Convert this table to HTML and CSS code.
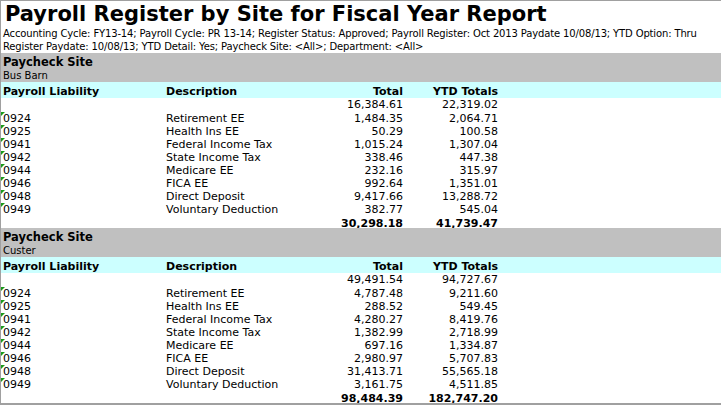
FILE: index.html
```html
<!DOCTYPE html>
<html>
<head>
<meta charset="utf-8">
<link rel="stylesheet" href="styles.css">
</head>
<body>
<div class="page">
  <h1 class="title">Payroll Register by Site for Fiscal Year Report</h1>
  <div class="params">
    <div class="pline">Accounting Cycle: FY13-14; Payroll Cycle: PR 13-14; Register Status: Approved; Payroll Register: Oct 2013 Paydate 10/08/13; YTD Option: Thru</div>
    <div class="pline">Register Paydate: 10/08/13; YTD Detail: Yes; Paycheck Site: &lt;All&gt;; Department: &lt;All&gt;</div>
  </div>

  <section class="site">
    <div class="site-head">
      <div class="site-label">Paycheck Site</div>
      <div class="site-name">Bus Barn</div>
    </div>
    <div class="row col-head">
      <span>Payroll Liability</span><span>Description</span><span class="num">Total</span><span class="num">YTD Totals</span>
    </div>
    <div class="row sum-row"><span></span><span></span><span class="num">16,384.61</span><span class="num">22,319.02</span></div>
    <div class="row"><span class="code">0924</span><span>Retirement EE</span><span class="num">1,484.35</span><span class="num">2,064.71</span></div>
    <div class="row"><span class="code">0925</span><span>Health Ins EE</span><span class="num">50.29</span><span class="num">100.58</span></div>
    <div class="row"><span class="code">0941</span><span>Federal Income Tax</span><span class="num">1,015.24</span><span class="num">1,307.04</span></div>
    <div class="row"><span class="code">0942</span><span>State Income Tax</span><span class="num">338.46</span><span class="num">447.38</span></div>
    <div class="row"><span class="code">0944</span><span>Medicare EE</span><span class="num">232.16</span><span class="num">315.97</span></div>
    <div class="row"><span class="code">0946</span><span>FICA EE</span><span class="num">992.64</span><span class="num">1,351.01</span></div>
    <div class="row"><span class="code">0948</span><span>Direct Deposit</span><span class="num">9,417.66</span><span class="num">13,288.72</span></div>
    <div class="row"><span class="code">0949</span><span>Voluntary Deduction</span><span class="num">382.77</span><span class="num">545.04</span></div>
    <div class="row total-row"><span></span><span></span><span class="num">30,298.18</span><span class="num">41,739.47</span></div>
  </section>

  <section class="site">
    <div class="site-head">
      <div class="site-label">Paycheck Site</div>
      <div class="site-name">Custer</div>
    </div>
    <div class="row col-head">
      <span>Payroll Liability</span><span>Description</span><span class="num">Total</span><span class="num">YTD Totals</span>
    </div>
    <div class="row sum-row"><span></span><span></span><span class="num">49,491.54</span><span class="num">94,727.67</span></div>
    <div class="row"><span class="code">0924</span><span>Retirement EE</span><span class="num">4,787.48</span><span class="num">9,211.60</span></div>
    <div class="row"><span class="code">0925</span><span>Health Ins EE</span><span class="num">288.52</span><span class="num">549.45</span></div>
    <div class="row"><span class="code">0941</span><span>Federal Income Tax</span><span class="num">4,280.27</span><span class="num">8,419.76</span></div>
    <div class="row"><span class="code">0942</span><span>State Income Tax</span><span class="num">1,382.99</span><span class="num">2,718.99</span></div>
    <div class="row"><span class="code">0944</span><span>Medicare EE</span><span class="num">697.16</span><span class="num">1,334.87</span></div>
    <div class="row"><span class="code">0946</span><span>FICA EE</span><span class="num">2,980.97</span><span class="num">5,707.83</span></div>
    <div class="row"><span class="code">0948</span><span>Direct Deposit</span><span class="num">31,413.71</span><span class="num">55,565.18</span></div>
    <div class="row"><span class="code">0949</span><span>Voluntary Deduction</span><span class="num">3,161.75</span><span class="num">4,511.85</span></div>
    <div class="row total-row"><span></span><span></span><span class="num">98,484.39</span><span class="num">182,747.20</span></div>
  </section>
</div>
</body>
</html>
```
FILE: styles.css
```css
html, body {
  margin: 0;
  padding: 0;
  background: #ffffff;
}
body {
  font-family: "DejaVu Sans", Verdana, sans-serif;
  font-size: 11px;
  line-height: 13px;
  color: #000;
}
.page {
  box-sizing: border-box;
  width: 721px;
  height: 405px;
  border-top: 1px solid #a0a0a0;
  border-left: 1px solid #a0a0a0;
  border-bottom: 2px solid #a0a0a0;
  overflow: hidden;
}
.title {
  margin: 0;
  padding-left: 4px;
  height: 26px;
  font-size: 21px;
  line-height: 26px;
  font-weight: bold;
  white-space: nowrap;
}
.params {
  padding-left: 2px;
  font-size: 10px;
  letter-spacing: -0.14px;
}
.pline {
  height: 13px;
  white-space: nowrap;
}
.site-head {
  box-sizing: border-box;
  height: 29px;
  padding: 3px 2px 0;
  background: #c0c0c0;
}
.site-label {
  height: 13px;
  font-weight: bold;
  font-size: 11.5px;
}
.site-name {
  height: 13px;
  font-size: 10px;
}
.row {
  display: grid;
  grid-template-columns: 163px 150px 87px 95px 1fr;
  height: 13px;
  padding-left: 2px;
  white-space: nowrap;
}
.num {
  text-align: right;
}
.col-head {
  box-sizing: border-box;
  height: 16px;
  padding-top: 3px;
  background: #ccffff;
  font-weight: bold;
}
.sum-row {
  height: 14px;
}
.total-row {
  box-sizing: border-box;
  height: 12px;
  padding-top: 1px;
  font-weight: bold;
  overflow: hidden;
}
.code {
  position: relative;
}
.code::before {
  content: "";
  position: absolute;
  left: -2px;
  top: 0;
  width: 0;
  height: 0;
  border-top: 4px solid #1a9a1a;
  border-right: 4px solid transparent;
}
```
